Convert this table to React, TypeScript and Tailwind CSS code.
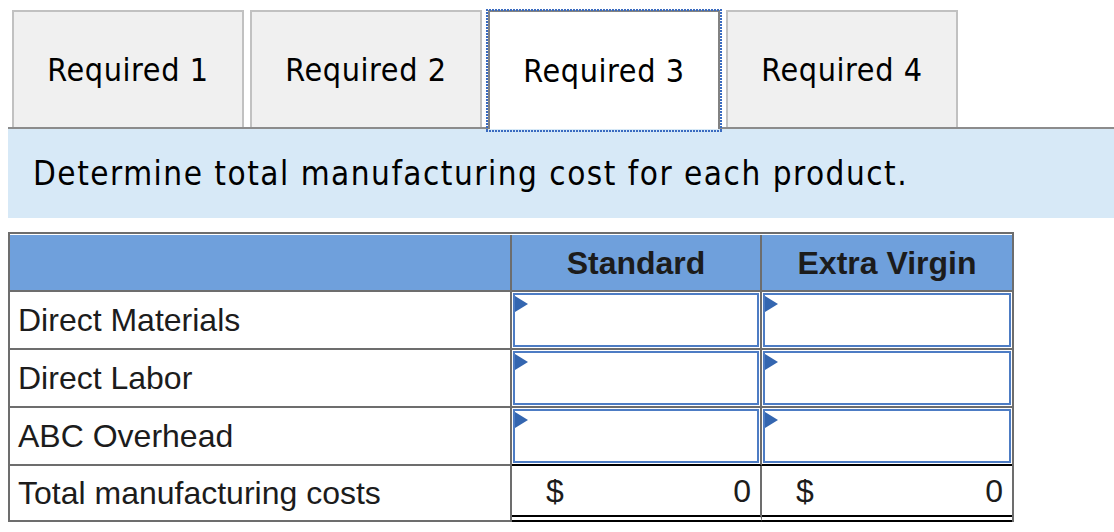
import React from "react";

const tabs = ["Required 1", "Required 2", "Required 3", "Required 4"];
const active = 2;

const rows = ["Direct Materials", "Direct Labor", "ABC Overhead"];

function Marker() {
  return (
    <svg
      width="13"
      height="16"
      viewBox="0 0 13 16"
      className="absolute left-0 top-px"
    >
      <path d="M0 0 L13 8 L0 16 Z" fill="#3466b0" />
    </svg>
  );
}

function InputCell({ last, black }: { last?: boolean; black?: boolean }) {
  return (
    <div
      className={`h-[58px] p-px border-b-2 ${black ? "border-b-black" : "border-b-[#6d6d6d]"} ${
        last ? "flex-1" : "w-[250px] border-r-2 border-r-[#6d6d6d]"
      }`}
    >
      <div className="relative h-full w-full border-2 border-[#4d7cc4] bg-white">
        <Marker />
      </div>
    </div>
  );
}

// dotted focus ring drawn with repeating gradients (crisper than border-dotted)
function FocusRing() {
  const h = "bg-[repeating-linear-gradient(90deg,#3a6bc0_0_2px,transparent_2px_3px)]";
  const v = "bg-[repeating-linear-gradient(180deg,#3a6bc0_0_2px,transparent_2px_3px)]";
  return (
    <span className="absolute -left-[4px] -right-[4px] -top-[3px] -bottom-[3px] pointer-events-none">
      <span className={`absolute left-0 right-0 top-0 h-[2px] ${h}`} />
      <span className={`absolute left-0 right-0 bottom-0 h-[2px] ${h}`} />
      <span className={`absolute top-0 bottom-0 left-0 w-[2px] ${v}`} />
      <span className={`absolute top-0 bottom-0 right-0 w-[2px] ${v}`} />
    </span>
  );
}

export default function App() {
  return (
    <div className="w-[1114px] h-[532px] bg-white overflow-hidden text-black">
      {/* Tabs */}
      <div className="ml-2 mt-[10px] h-[119px] flex items-start gap-[6px] pl-1 border-b-2 border-[#8c8c8c] font-['DejaVu_Sans_Condensed','DejaVu_Sans',sans-serif] [font-stretch:condensed] text-[32px] tracking-[0.6px]">
        {tabs.map((t, i) =>
          i === active ? (
            <div
              key={t}
              className="relative z-10 w-[232px] h-[119px] flex items-center justify-center bg-white border-2 border-b-0 border-[#828282]"
            >
              {t}
              <FocusRing />
            </div>
          ) : (
            <div
              key={t}
              className="w-[232px] h-[117px] flex items-center justify-center bg-[#f0f0f0] border-2 border-b-0 border-[#c1c1c1]"
            >
              {t}
            </div>
          )
        )}
      </div>

      {/* Instruction banner */}
      <div className="ml-2 h-[89px] bg-[#d7e9f7] flex items-center pl-[25px] font-['DejaVu_Sans_Condensed','DejaVu_Sans',sans-serif] [font-stretch:condensed] text-[33px] tracking-[1.5px]">
        Determine total manufacturing cost for each product.
      </div>

      {/* Table */}
      <div className="ml-2 mt-[14px] w-[1006px] border-t-2 border-x-2 border-[#6d6d6d] font-['Liberation_Sans',Arial,sans-serif] text-[32px] text-[#1c1c1c]">
        <div className="mt-px h-[57px] flex bg-[#6fa0dc] border-b-2 border-[#6d6d6d] font-bold">
          <div className="w-[502px] border-r-2 border-[#6d6d6d]" />
          <div className="w-[250px] border-r-2 border-[#6d6d6d] flex items-center justify-center">
            Standard
          </div>
          <div className="flex-1 flex items-center justify-center">Extra Virgin</div>
        </div>

        {rows.map((r, i) => (
          <div key={r} className="flex">
            <div className="w-[502px] h-[58px] border-r-2 border-b-2 border-[#6d6d6d] flex items-center pl-2">
              {r}
            </div>
            <InputCell black={i === rows.length - 1} />
            <InputCell last black={i === rows.length - 1} />
          </div>
        ))}

        <div className="flex">
          <div className="w-[502px] h-[56px] border-r-2 border-b-2 border-[#6d6d6d] flex items-center pl-2">
            Total manufacturing costs
          </div>
          <div className="w-[250px] h-[56px] border-r-2 border-r-[#6d6d6d] border-b-[7px] border-b-black border-double flex items-center justify-between pl-[34px] pr-[9px]">
            <span>$</span>
            <span>0</span>
          </div>
          <div className="flex-1 h-[56px] border-b-[7px] border-b-black border-double flex items-center justify-between pl-[34px] pr-[9px]">
            <span>$</span>
            <span>0</span>
          </div>
        </div>
      </div>
    </div>
  );
}
